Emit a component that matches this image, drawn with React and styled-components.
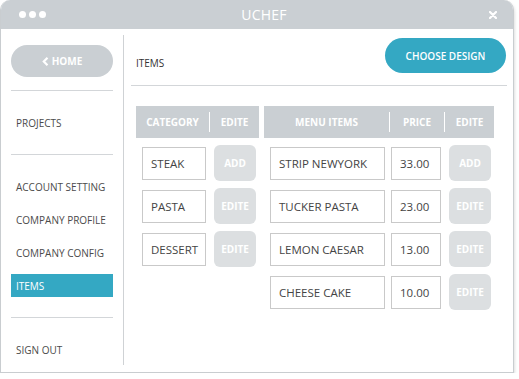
import React from 'react'
import styled, { createGlobalStyle } from 'styled-components'

const GlobalStyle = createGlobalStyle`
    html, body {
        margin: 0;
        padding: 0;
        background: #ffffff;
        font-family: "Open Sans", "Liberation Sans", sans-serif;
    }
    * {
        box-sizing: border-box;
    }
`

const Window = styled.div`
    width: 514px;
    height: 373px;
    border: 1px solid #c9cdd0;
    border-top: none;
    border-radius: 10px 10px 0 0;
    background: #fff;
    box-shadow: 1px 2px 3px rgba(0, 0, 0, 0.12);
    display: flex;
    flex-direction: column;
    overflow: hidden;
`

const TitleBar = styled.div`
    flex-shrink: 0;
    height: 29px;
    background: #cacfd3;
    display: flex;
    align-items: center;
    justify-content: space-between;
    padding: 0 16px 0 18px;
    color: #fff;
`

const Dots = styled.div`
    display: flex;
    gap: 3px;
    width: 40px;
`

const Dot = styled.span`
    width: 7px;
    height: 7px;
    border-radius: 50%;
    background: #fff;
`

const Title = styled.div`
    font-size: 14px;
    letter-spacing: 0.2px;
    margin-left: 12px;
`

const Close = styled.div`
    width: 40px;
    display: flex;
    justify-content: flex-end;
`

const Body = styled.div`
    flex: 1;
    min-height: 0;
    display: flex;
    padding: 6px 0 7px;
`

const Sidebar = styled.div`
    width: 123px;
    flex-shrink: 0;
    border-right: 1px solid #cfd2d5;
    padding: 10px 10px 0 10px;
    display: flex;
    flex-direction: column;
`

const HomeButton = styled.div`
    flex-shrink: 0;
    height: 32px;
    border-radius: 16px;
    background: #cacfd3;
    color: #fff;
    font-size: 10px;
    font-weight: 700;
    display: flex;
    align-items: center;
    justify-content: center;
    gap: 3px;
    margin-bottom: 13px;
`

const Divider = styled.div`
    flex-shrink: 0;
    height: 1px;
    background: #d3d6d9;
`

const NavGroup = styled.div`
    padding: 20px 0;
    display: flex;
    flex-direction: column;
    gap: 10px;
`

const NavItem = styled.div`
    height: 23px;
    display: flex;
    align-items: center;
    padding-left: 5px;
    font-size: 10px;
    color: ${p => (p.$active ? '#fff' : '#4b4b4b')};
    background: ${p => (p.$active ? '#34a8c3' : 'transparent')};
`

const Main = styled.div`
    flex: 1;
    padding: 3px 6px 0 7px;
    display: flex;
    flex-direction: column;
`

const MainHeader = styled.div`
    display: flex;
    justify-content: space-between;
    align-items: center;
    padding: 0 0 12px 5px;
    border-bottom: 1px solid #d3d6d9;
`

const PageTitle = styled.div`
    font-size: 10px;
    color: #333;
    padding-top: 14px;
`

const DesignButton = styled.div`
    width: 121px;
    height: 35px;
    border-radius: 18px;
    background: #34a8c3;
    color: #fff;
    font-size: 10px;
    font-weight: 600;
    display: flex;
    align-items: center;
    justify-content: center;
    margin-right: 1px;
`

const Tables = styled.div`
    display: flex;
    gap: 5px;
    padding: 20px 0 0 5px;
    align-items: flex-start;
`

const Table = styled.div`
    width: ${p => p.$width}px;
    display: flex;
    flex-direction: column;
`

const HeadRow = styled.div`
    height: 32px;
    background: #cacfd3;
    display: flex;
    align-items: center;
    margin-bottom: 7px;
`

const HeadCell = styled.div`
    width: ${p => p.$width}px;
    color: #fff;
    font-size: 10px;
    font-weight: 700;
    text-align: center;
    height: 20px;
    line-height: 20px;
    border-left: ${p => (p.$divider ? '1px solid #fff' : 'none')};
`

const Rows = styled.div`
    display: flex;
    flex-direction: column;
    gap: 7px;
    padding-left: 6px;
`

const Row = styled.div`
    height: 36px;
    display: flex;
    align-items: center;
`

const Field = styled.div`
    width: ${p => p.$width}px;
    height: 33px;
    border: 1px solid #c9c9c9;
    margin-right: ${p => p.$gap}px;
    display: flex;
    align-items: center;
    padding-left: 8px;
    font-size: 11.5px;
    color: #444;
`

const SmallButton = styled.div`
    width: 42px;
    height: 36px;
    border-radius: 6px;
    background: #dcdfe1;
    color: #fff;
    font-size: 10px;
    font-weight: 700;
    display: flex;
    align-items: center;
    justify-content: center;
`

const categories = ['STEAK', 'PASTA', 'DESSERT']

const menuItems = [
    { name: 'STRIP NEWYORK', price: '33.00' },
    { name: 'TUCKER PASTA', price: '23.00' },
    { name: 'LEMON CAESAR', price: '13.00' },
    { name: 'CHEESE CAKE', price: '10.00' },
]

const ChevronLeft = () => (
    <svg width="7" height="9" viewBox="0 0 7 9">
        <path d="M5.5 0.8 L1.8 4.5 L5.5 8.2" fill="none" stroke="#fff" strokeWidth="2.2" />
    </svg>
)

const CloseIcon = () => (
    <svg width="8" height="8" viewBox="0 0 8 8">
        <path d="M1 1 L7 7 M7 1 L1 7" stroke="#fff" strokeWidth="2.2" strokeLinecap="round" />
    </svg>
)

export default function App() {
    return (
        <>
            <GlobalStyle />
            <Window>
                <TitleBar>
                    <Dots>
                        <Dot />
                        <Dot />
                        <Dot />
                    </Dots>
                    <Title>UCHEF</Title>
                    <Close>
                        <CloseIcon />
                    </Close>
                </TitleBar>
                <Body>
                    <Sidebar>
                        <HomeButton>
                            <ChevronLeft />
                            HOME
                        </HomeButton>
                        <Divider />
                        <NavGroup>
                            <NavItem>PROJECTS</NavItem>
                        </NavGroup>
                        <Divider />
                        <NavGroup>
                            <NavItem>ACCOUNT SETTING</NavItem>
                            <NavItem>COMPANY PROFILE</NavItem>
                            <NavItem>COMPANY CONFIG</NavItem>
                            <NavItem $active>ITEMS</NavItem>
                        </NavGroup>
                        <Divider />
                        <NavGroup>
                            <NavItem>SIGN OUT</NavItem>
                        </NavGroup>
                    </Sidebar>
                    <Main>
                        <MainHeader>
                            <PageTitle>ITEMS</PageTitle>
                            <DesignButton>CHOOSE DESIGN</DesignButton>
                        </MainHeader>
                        <Tables>
                            <Table $width={123}>
                                <HeadRow>
                                    <HeadCell $width={73}>CATEGORY</HeadCell>
                                    <HeadCell $width={50} $divider>EDITE</HeadCell>
                                </HeadRow>
                                <Rows>
                                    {categories.map((c, i) => (
                                        <Row key={c}>
                                            <Field $width={64} $gap={8}>{c}</Field>
                                            <SmallButton>{i === 0 ? 'ADD' : 'EDITE'}</SmallButton>
                                        </Row>
                                    ))}
                                </Rows>
                            </Table>
                            <Table $width={230}>
                                <HeadRow>
                                    <HeadCell $width={125}>MENU ITEMS</HeadCell>
                                    <HeadCell $width={55} $divider>PRICE</HeadCell>
                                    <HeadCell $width={50} $divider>EDITE</HeadCell>
                                </HeadRow>
                                <Rows>
                                    {menuItems.map((m, i) => (
                                        <Row key={m.name}>
                                            <Field $width={115} $gap={6}>{m.name}</Field>
                                            <Field $width={50} $gap={8}>{m.price}</Field>
                                            <SmallButton>{i === 0 ? 'ADD' : 'EDITE'}</SmallButton>
                                        </Row>
                                    ))}
                                </Rows>
                            </Table>
                        </Tables>
                    </Main>
                </Body>
            </Window>
        </>
    )
}
